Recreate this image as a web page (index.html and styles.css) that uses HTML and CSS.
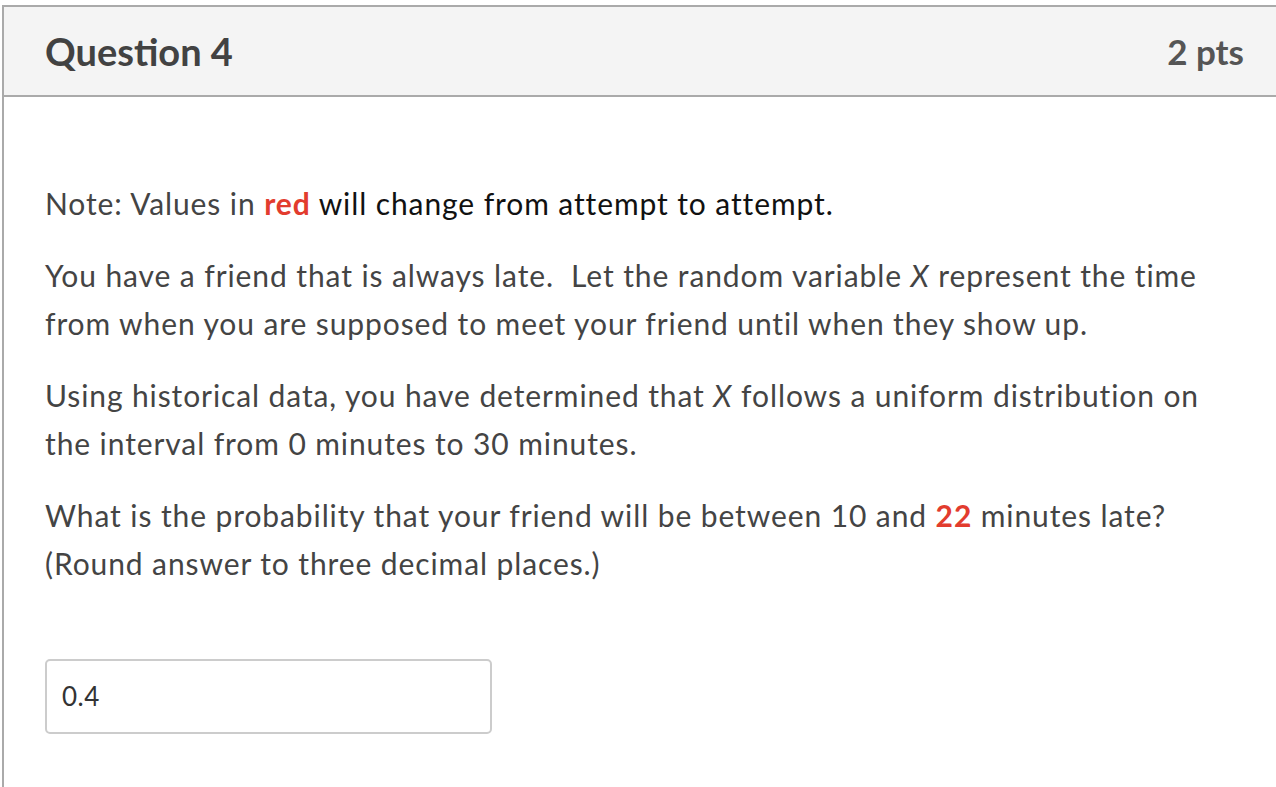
FILE: index.html
```html
<!DOCTYPE html>
<html lang="en">
<head>
<meta charset="utf-8">
<title>Question 4</title>
<link rel="stylesheet" href="styles.css">
</head>
<body>
<div class="question">
  <div class="question-header">
    <h2 class="question-title">Question 4</h2>
    <span class="question-points">2 pts</span>
  </div>
  <div class="question-body">
    <p class="para">Note: Values in <strong class="red">red</strong> <span class="black">will change from attempt to attempt.</span></p>
    <p class="para">You have a friend that is always late.&nbsp; Let the random variable <em>X</em> represent the time from when you are supposed to meet your friend until when they show up.</p>
    <p class="para">Using historical data, you have determined that <em>X</em> follows a uniform distribution on the interval from 0 minutes to 30 minutes.</p>
    <p class="para">What is the probability that your friend will be between 10 and <strong class="red">22</strong> minutes late? (Round answer to three decimal places.)</p>
    <div class="answer">
      <input class="answer-input" type="text" value="0.4">
    </div>
  </div>
</div>
</body>
</html>
```

FILE: styles.css
```css
html, body {
  margin: 0;
  padding: 0;
  background: #ffffff;
  overflow: hidden;
}

body {
  font-family: Lato, "Noto Sans", sans-serif;
  color: #444444;
}

.question {
  margin: 5px 0 0 2px;
  width: 1320px;
  min-height: 790px;
  border-top: 2px solid #aaaaaa;
  border-left: 2px solid #aaaaaa;
  box-sizing: border-box;
}

.question-header {
  display: flex;
  align-items: center;
  justify-content: space-between;
  width: 1276px;
  box-sizing: border-box;
  height: 90px;
  padding: 0 36px 0 41px;
  background: #f4f4f4;
  border-bottom: 2px solid #aaaaaa;
}

.question-title {
  margin: 0;
  font-size: 38px;
  font-weight: 700;
  color: #424242;
}

.question-points {
  font-size: 35px;
  font-weight: 700;
  color: #555555;
}

.question-body {
  padding: 82px 0 0 41px;
  width: 1192px;
}

.para {
  margin: 0 0 23px 0;
  font-size: 30px;
  letter-spacing: 0.9px;
  line-height: 48.5px;
}

.red {
  color: #e23c2e;
  font-weight: 700;
}

.black {
  color: #111111;
}

.answer {
  padding-top: 48px;
}

.answer-input {
  display: block;
  width: 447px;
  height: 75px;
  box-sizing: border-box;
  border: 2px solid #cccccc;
  border-radius: 5px;
  padding: 0 15px;
  font-family: Lato, "Noto Sans", sans-serif;
  font-size: 26px;
  letter-spacing: 0.5px;
  color: #333333;
  background: #ffffff;
  outline: none;
}
```
